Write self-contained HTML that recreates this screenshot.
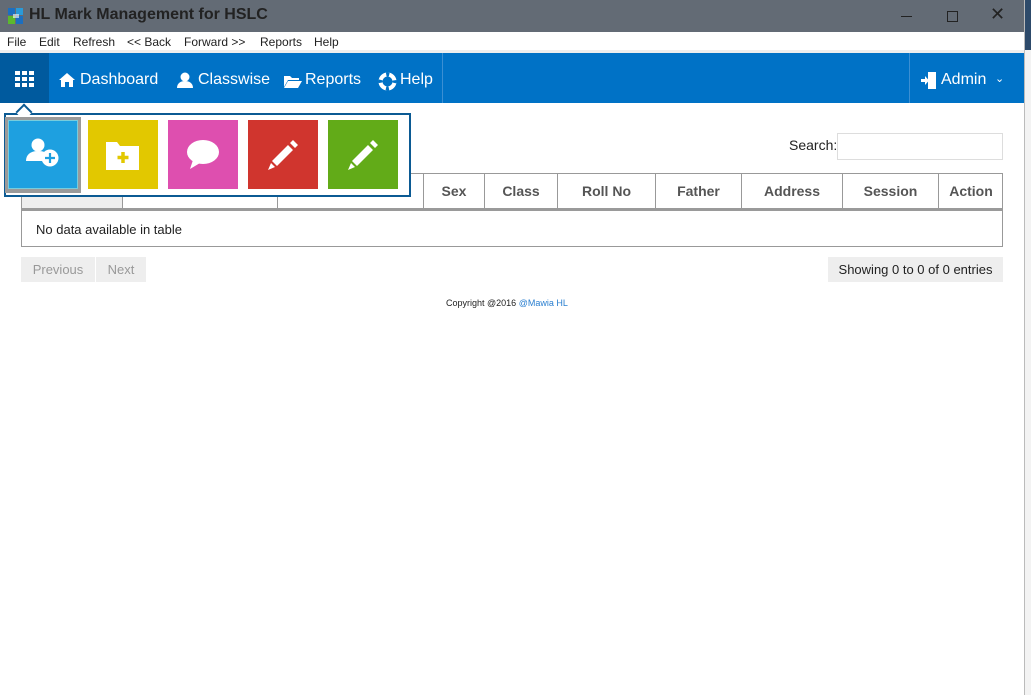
<!DOCTYPE html>
<html><head><meta charset="utf-8"><style>
*{box-sizing:border-box;margin:0;padding:0}
body{width:1031px;height:695px;position:relative;overflow:hidden;background:#fff;font-family:"Liberation Sans","DejaVu Sans",sans-serif;font-size:14px;color:#222}
.a{position:absolute}
.title{left:0;top:0;width:1024px;height:32px;background:#636b75}
.menu{left:0;top:32px;width:1024px;height:18px;background:#fff;font-size:12px}
.menu span{position:absolute;top:3px}
.nav{left:0;top:53px;width:1024px;height:50px;background:#0072c6;color:#fff;font-size:16px}
.nav .it{position:absolute;top:18px}
.tile{position:absolute;top:120px;width:70px;height:69px}
.col{position:absolute;top:173px;height:36px;border-left:1px solid #999}
.hd{position:absolute;top:183px;font-weight:bold;color:#555;font-size:14px;text-align:center}
</style></head><body>
<div class="a title">
 <svg class="a" style="left:8px;top:8px" width="16" height="16"><rect x="0" y="0" width="7" height="7" fill="#1c6fc0"/><rect x="8" y="0" width="7" height="7" fill="#2a9ad8"/><rect x="0" y="8" width="7" height="8" fill="#5cb82e"/><rect x="8" y="8" width="7" height="8" fill="#1c6fc0"/><rect x="5" y="6" width="6" height="4" fill="#fff" opacity=".6"/></svg>
 <div class="a" style="left:29px;top:6px;font-size:16px;font-weight:bold;color:#222">HL Mark Management for HSLC</div>
 <div class="a" style="left:901px;top:16px;width:11px;height:1px;background:#222"></div>
 <div class="a" style="left:947px;top:11px;width:11px;height:11px;border:1px solid #222"></div>
 <div class="a" style="left:990px;top:4px;font-size:18px;color:#222">✕</div>
</div>
<div class="a" style="left:1024px;top:0;width:7px;height:695px;background:#f3f3f3;border-left:1px solid #bbb"></div>
<div class="a" style="left:1025px;top:0;width:6px;height:50px;background:#2d4a6a"></div>
<div class="a menu"><span style="left:7px">File</span><span style="left:39px">Edit</span><span style="left:73px">Refresh</span><span style="left:127px">&lt;&lt; Back</span><span style="left:184px">Forward &gt;&gt;</span><span style="left:260px">Reports</span><span style="left:314px">Help</span></div>
<div class="a" style="left:0;top:50px;width:1024px;height:3px;background:#eee"></div>
<div class="a nav">
 <div class="a" style="left:0;top:0;width:49px;height:50px;background:#005a9e"></div>
 <svg class="a" style="left:15px;top:18px" width="20" height="17" fill="#fff"><rect x="0" y="0" width="5" height="4"/><rect x="7" y="0" width="5" height="4"/><rect x="14" y="0" width="5" height="4"/><rect x="0" y="6" width="5" height="4"/><rect x="7" y="6" width="5" height="4"/><rect x="14" y="6" width="5" height="4"/><rect x="0" y="12" width="5" height="4"/><rect x="7" y="12" width="5" height="4"/><rect x="14" y="12" width="5" height="4"/></svg>
 <svg class="a" style="left:58px;top:19px" width="18" height="16" fill="#fff"><path d="M9 1L1 8h2v7h4v-5h4v5h4V8h2z"/></svg>
 <div class="it" style="left:80px">Dashboard</div>
 <svg class="a" style="left:176px;top:18px" width="18" height="18" fill="#fff"><circle cx="9" cy="6" r="4.5"/><path d="M1 17c0-5 4-7 8-7s8 2 8 7z"/></svg>
 <div class="it" style="left:198px">Classwise</div>
 <svg class="a" style="left:284px;top:21px" width="18" height="14" fill="#fff"><path d="M0 2h6l2 2h7v2H4L0 13z M4 7h14l-4 7H0z"/></svg>
 <div class="it" style="left:305px">Reports</div>
 <svg class="a" style="left:378px;top:19px" width="19" height="19"><circle cx="9.5" cy="9.5" r="7" fill="none" stroke="#fff" stroke-width="4"/><circle cx="9.5" cy="9.5" r="7" fill="none" stroke="#0072c6" stroke-width="4" stroke-dasharray="3 8" stroke-dashoffset="1.5"/></svg>
 <div class="it" style="left:400px">Help</div>
 <div class="a" style="left:442px;top:0;width:1px;height:50px;background:#3b8fd3"></div>
 <div class="a" style="left:909px;top:0;width:1px;height:50px;background:#3b8fd3"></div>
 <svg class="a" style="left:921px;top:19px" width="16" height="17" fill="#fff"><rect x="7" y="0" width="8" height="17"/><path d="M0 7h4V4l4 4.5-4 4.5v-3H0z"/></svg>
 <div class="it" style="left:941px">Admin</div>
 <div class="a" style="left:995px;top:19px;font-size:11px">⌄</div>
</div>
<div class="a" style="left:789px;top:137px">Search:</div>
<div class="a" style="left:837px;top:133px;width:166px;height:27px;border:1px solid #ddd"></div>
<div class="a" style="left:21px;top:173px;width:982px;height:74px;border:1px solid #999"></div>
<div class="a" style="left:22px;top:174px;width:100px;height:34px;background:#eee"></div>
<div class="a" style="left:21px;top:208px;width:982px;height:3px;background:#9a9a9a"></div>
<div class="col" style="left:122px"></div><div class="col" style="left:277px"></div><div class="col" style="left:423px"></div><div class="col" style="left:484px"></div><div class="col" style="left:557px"></div><div class="col" style="left:655px"></div><div class="col" style="left:741px"></div><div class="col" style="left:842px"></div><div class="col" style="left:938px"></div>
<div class="hd" style="left:424px;width:60px">Sex</div>
<div class="hd" style="left:485px;width:72px">Class</div>
<div class="hd" style="left:558px;width:97px">Roll No</div>
<div class="hd" style="left:656px;width:85px">Father</div>
<div class="hd" style="left:742px;width:100px">Address</div>
<div class="hd" style="left:843px;width:95px">Session</div>
<div class="hd" style="left:939px;width:64px">Action</div>
<div class="a" style="left:36px;top:222px;font-size:13px">No data available in table</div>
<div class="a" style="left:21px;top:257px;width:74px;height:25px;background:#eee;color:#999;text-align:center;line-height:26px;font-size:13px">Previous</div>
<div class="a" style="left:96px;top:257px;width:50px;height:25px;background:#eee;color:#999;text-align:center;line-height:26px;font-size:13px">Next</div>
<div class="a" style="left:828px;top:257px;width:175px;height:25px;background:#eee;text-align:center;line-height:26px;font-size:13px">Showing 0 to 0 of 0 entries</div>
<div class="a" style="left:446px;top:298px;font-size:9px">Copyright @2016 <span style="color:#2a7fd0">@Mawia HL</span></div>
<div class="a" style="left:4px;top:113px;width:407px;height:84px;border:2px solid #0b5a93;background:#fff"></div>
<div class="a" style="left:18px;top:106px;width:12px;height:12px;background:#fff;border-left:2px solid #0b5a93;border-top:2px solid #0b5a93;transform:rotate(45deg)"></div>
<div class="tile" style="left:5px;top:117px;width:76px;height:76px;background:#9a9a9a"></div>
<div class="tile" style="left:8px;background:#1ea0e0;border:1px solid #7cd"></div>
<svg class="a" style="left:26px;top:138px" width="36" height="30"><circle cx="12" cy="7" r="6.5" fill="#fff"/><path d="M0 23c0-6 4-10 12-10s9 3 9 5v5z" fill="#fff"/><circle cx="24" cy="20" r="8.5" fill="#fff"/><path d="M24 15v10M19 20h10" stroke="#1ea0e0" stroke-width="2.2"/></svg>
<div class="tile" style="left:88px;background:#e2c800"></div>
<svg class="a" style="left:106px;top:142px" width="34" height="28"><path d="M0 0h11l3 4h19v24H0z" fill="#fff"/><path d="M17 10v11M11.5 15.5h11" stroke="#e2c800" stroke-width="3.5"/></svg>
<div class="tile" style="left:168px;background:#de4faf"></div>
<svg class="a" style="left:186px;top:139px" width="34" height="32"><ellipse cx="17" cy="13" rx="16" ry="12" fill="#fff"/><path d="M7 21l-3 9 10-6z" fill="#fff"/></svg>
<div class="tile" style="left:248px;background:#d0352e"></div>
<svg class="a" style="left:266px;top:138px" width="34" height="34"><path d="M27 2l5 5-3 3-5-5z M22 7l5 5-16 16-5-5z M5 25l4 4-7 3z" fill="#fff"/></svg>
<div class="tile" style="left:328px;background:#62ab18"></div>
<svg class="a" style="left:346px;top:138px" width="34" height="34"><path d="M27 2l5 5-3 3-5-5z M22 7l5 5-16 16-5-5z M5 25l4 4-7 3z" fill="#fff"/></svg>
</body></html>
